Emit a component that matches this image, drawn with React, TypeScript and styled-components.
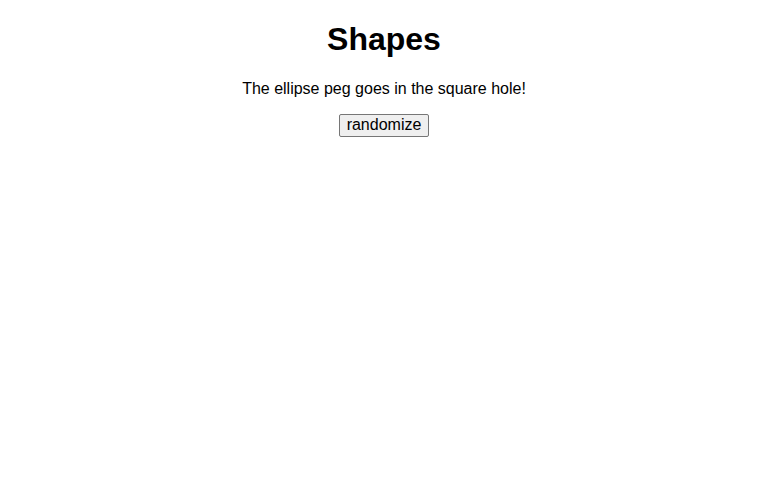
import React, { useState } from "react"
import styled, { createGlobalStyle } from "styled-components"

const GlobalStyle = createGlobalStyle`
  body {
    margin: 0 8px 8px;
    background: #ffffff;
    color: #000000;
    font-family: "Liberation Sans", Arial, sans-serif;
  }
`

const Page = styled.div`
  text-align: center;
`

const Title = styled.h1`
  font-size: 32px;
  font-weight: 700;
  margin: 21.44px 0;
`

const Caption = styled.p`
  font-size: 16px;
  margin: 16px 0;
`

const Button = styled.button`
  font-family: "Liberation Sans", Arial, sans-serif;
  font-size: 16px;
  color: #000000;
  background: #efefef;
  border: 1px solid #767676;
  border-radius: 2px;
  padding: 1px 7px 2px;
  cursor: pointer;
`

const shapes = ["ellipse", "square", "triangle", "circle", "hexagon"]

const App = () => {
  const [peg, setPeg] = useState("ellipse")
  const [hole, setHole] = useState("square")

  const randomize = () => {
    setPeg(shapes[Math.floor(Math.random() * shapes.length)])
    setHole(shapes[Math.floor(Math.random() * shapes.length)])
  }

  return (
    <Page>
      <GlobalStyle />
      <Title>Shapes</Title>
      <Caption>
        The {peg} peg goes in the {hole} hole!
      </Caption>
      <Button onClick={randomize}>randomize</Button>
    </Page>
  )
}

export default App
